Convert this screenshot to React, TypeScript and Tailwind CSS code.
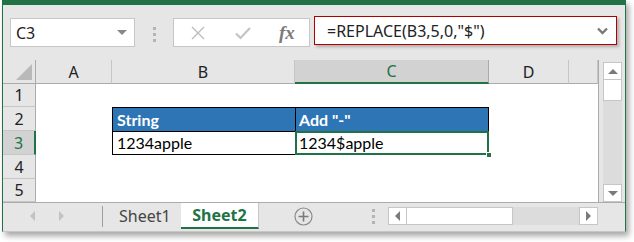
import React from "react";

const ui = { fontFamily: '"Noto Sans", "Open Sans", sans-serif' };
const cell = { fontFamily: 'Lato, "Noto Sans", sans-serif' };

const Tri = ({ dir, color = "#777" }: { dir: "up" | "down" | "left" | "right"; color?: string }) => {
  const pts = {
    up: "0,6 5,1 10,6",
    down: "0,1 5,6 10,1",
    left: "6,0 1,5 6,10",
    right: "1,0 6,5 1,10",
  }[dir];
  const vertical = dir === "up" || dir === "down";
  return (
    <svg width={vertical ? 10 : 7} height={vertical ? 7 : 10} viewBox={vertical ? "0 0 10 7" : "0 0 7 10"}>
      <polygon points={pts} fill={color} />
    </svg>
  );
};

const Dots = () => (
  <div className="flex flex-col gap-[3px]">
    <span className="w-[3px] h-[3px] bg-[#b4b4b4]" />
    <span className="w-[3px] h-[3px] bg-[#b4b4b4]" />
    <span className="w-[3px] h-[3px] bg-[#b4b4b4]" />
  </div>
);

const Toolbar = () => (
  <div className="h-[55px] flex items-start pl-[7px]" style={ui}>
    <div className="mt-[13px] w-[125px] h-[29px] bg-white border border-[#c6c6c6] flex items-center justify-between pl-[5px] pr-[7px]">
      <span className="text-[16px] text-[#222] leading-none">C3</span>
      <Tri dir="down" color="#888" />
    </div>
    <div className="mt-[22px] ml-[18px]">
      <Dots />
    </div>
    <div className="mt-[13px] ml-[17px] w-[137px] h-[29px] bg-white border border-[#c6c6c6] flex items-center">
      <svg width="14" height="14" viewBox="0 0 14 14" className="ml-[17px]">
        <path d="M1 1 L13 13 M13 1 L1 13" stroke="#bdbdbd" strokeWidth="1.4" fill="none" />
      </svg>
      <svg width="16" height="14" viewBox="0 0 16 14" className="ml-[30px]">
        <path d="M1 7.5 L5.5 12 L15 2" stroke="#c4c4c4" strokeWidth="2.2" fill="none" />
      </svg>
      <span
        className="ml-[28px] text-[19px] italic font-bold text-[#7a7a7a] leading-none"
        style={{ fontFamily: '"Liberation Serif", serif' }}
      >
        fx
      </span>
    </div>
    <div className="mt-[11px] ml-[4px] w-[303px] h-[29px] bg-white border border-[#b00000] shadow-[2px_2px_3px_rgba(0,0,0,0.25)] flex items-center justify-between pl-[12px] pr-[8px]">
      <span className="text-[16px] text-[#222] leading-none">=REPLACE(B3,5,0,"$")</span>
      <svg width="11" height="8" viewBox="0 0 11 8">
        <path d="M1 1.5 L5.5 6 L10 1.5" stroke="#7a7a7a" strokeWidth="2.4" fill="none" />
      </svg>
    </div>
  </div>
);

const cols = [
  { key: "A", w: "w-[76px]" },
  { key: "B", w: "w-[183px]" },
  { key: "C", w: "w-[194px]" },
  { key: "D", w: "w-[80px]" },
  { key: "", w: "w-[29px]" },
];

const rowHeights = ["h-[23px]", "h-[24px]", "h-[24px]", "h-[24px]", "h-[23px]"];

const Sheet = () => (
  <div className="w-[596px] h-[142px] flex flex-col border-r border-[#ababab] bg-white">
    {/* column headers */}
    <div className="h-[24px] flex bg-[#e6e6e6]" style={ui}>
      <div className="w-[33px] h-full border-r border-[#ababab] border-b border-b-[#ababab] flex items-end justify-end pr-[3px] pb-[3px]">
        <svg width="16" height="16" viewBox="0 0 16 16">
          <polygon points="16,0 16,16 0,16" fill="#b9b9b9" />
        </svg>
      </div>
      {cols.map((c) =>
        c.key === "C" ? (
          <div
            key={c.key}
            className={`${c.w} h-full bg-[#d2d2d2] border-r border-[#ababab] border-b-2 border-b-[#217346] flex items-center justify-center text-[16px] text-[#217346]`}
          >
            C
          </div>
        ) : (
          <div
            key={c.key || "e"}
            className={`${c.w} h-full border-r border-[#c6c6c6] border-b border-b-[#ababab] flex items-center justify-center text-[16px] text-[#222]`}
          >
            {c.key}
          </div>
        )
      )}
    </div>
    {/* rows */}
    {[1, 2, 3, 4, 5].map((r, i) => (
      <div key={r} className={`${rowHeights[i]} flex`}>
        <div
          className={
            r === 3
              ? "w-[33px] h-full bg-[#d2d2d2] border-r-2 border-[#217346] border-b border-b-[#c6c6c6] flex items-center justify-center text-[16px] text-[#217346]"
              : "w-[33px] h-full bg-[#e6e6e6] border-r border-[#ababab] border-b border-b-[#c6c6c6] flex items-center justify-center text-[16px] text-[#222]"
          }
          style={ui}
        >
          {r}
        </div>
        <div className="w-[76px]" />
        {r === 2 && (
          <>
            <div
              className="w-[183px] h-full bg-[#2e75b6] border-t border-l border-black flex items-center pl-[4px] text-[16px] font-bold text-white"
              style={cell}
            >
              String
            </div>
            <div
              className="w-[194px] h-full bg-[#2e75b6] border-t border-x border-black flex items-center pl-[3px] text-[16px] font-bold text-white"
              style={cell}
            >
              Add "-"
            </div>
          </>
        )}
        {r === 3 && (
          <>
            <div
              className="w-[183px] h-full border-y border-l border-black flex items-center pl-[4px] text-[16px] text-black"
              style={cell}
            >
              1234apple
            </div>
            <div
              className="relative w-[194px] h-full border border-black flex items-center pl-[3px] text-[16px] text-black"
              style={cell}
            >
              1234$apple
              <div className="absolute -inset-[1px] border-2 border-[#217346]" />
              <div className="absolute -right-[4px] -bottom-[4px] w-[6px] h-[6px] bg-[#217346] border border-white" />
            </div>
          </>
        )}
      </div>
    ))}
  </div>
);

const ScrollBtn = ({ dir, className = "" }: { dir: "up" | "down" | "left" | "right"; className?: string }) => (
  <div className={`w-[19px] h-[18px] bg-white border border-[#c6c6c6] flex items-center justify-center ${className}`}>
    <Tri dir={dir} color="#7a7a7a" />
  </div>
);

const VScroll = () => (
  <div className="w-[26px] h-[142px] flex flex-col items-center pt-[2px] pl-[1px]">
    <ScrollBtn dir="up" />
    <div className="w-[19px] h-[21px] bg-white border border-[#c6c6c6] border-t-0" />
    <div className="w-[19px] flex-1 bg-[#dcdcdc]" />
    <ScrollBtn dir="down" />
  </div>
);

const TabBar = () => (
  <div className="h-[29px] flex items-start border-t border-[#ababab] bg-[#e6e6e6]" style={ui}>
    <div className="h-[26px] flex items-center pl-[26px]">
      <Tri dir="left" color="#c2c2c2" />
      <div className="ml-[22px]">
        <Tri dir="right" color="#c2c2c2" />
      </div>
      <div className="ml-[37px] w-px h-[21px] bg-[#9f9f9f]" />
    </div>
    <div className="h-[26px] w-[78px] flex items-center pl-[16px] text-[16px] text-[#444]">Sheet1</div>
    <div className="h-[26px] w-[78px] bg-white border-r border-[#c6c6c6] border-b-2 border-b-[#217346] flex items-center justify-center text-[16px] font-bold text-[#217346]">
      Sheet2
    </div>
    <div className="h-[26px] flex items-center ml-[35px]">
      <svg width="19" height="19" viewBox="0 0 19 19">
        <circle cx="9.5" cy="9.5" r="8.5" fill="none" stroke="#8a8a8a" strokeWidth="1.2" />
        <path d="M4.5 9.5 H14.5 M9.5 4.5 V14.5" stroke="#7a7a7a" strokeWidth="1.6" />
      </svg>
    </div>
    <div className="h-[26px] flex items-center ml-[59px]">
      <Dots />
    </div>
    <div className="h-[26px] flex items-center ml-[13px]">
      <ScrollBtn dir="left" />
      <div className="w-[106px] h-[18px] bg-white border-y border-r border-[#c6c6c6]" />
      <div className="w-[66px] h-[18px] bg-[#dcdcdc]" />
      <ScrollBtn dir="right" />
    </div>
  </div>
);

export default function App() {
  return (
    <div className="w-[634px] h-[242px] bg-white overflow-hidden">
      <div className="ml-[2px] w-[624px] h-[232px] flex flex-col bg-[#e6e6e6] border-x border-[#217346] border-t-[5px] border-t-[#217346] border-b border-b-[#c6c6c6] shadow-[3px_4px_6px_rgba(0,0,0,0.35)]">
        <Toolbar />
        <div className="flex">
          <Sheet />
          <VScroll />
        </div>
        <TabBar />
      </div>
    </div>
  );
}
